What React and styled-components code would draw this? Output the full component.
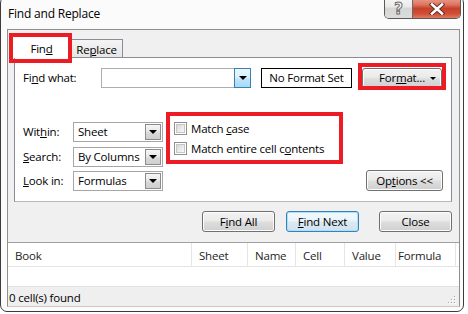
import React from 'react';
import styled, { createGlobalStyle, css } from 'styled-components';

const FONT = `"Segoe UI", "Open Sans", "Noto Sans", sans-serif`;
const RED = '#ed1c24';

const Global = createGlobalStyle`
  html, body { margin: 0; padding: 0; background: #ffffff; }
  body {
    font-family: ${FONT};
    font-size: 11.5px;
    letter-spacing: -0.2px;
    color: #000;
    width: 468px;
    height: 314px;
    overflow: hidden;
  }
  * { box-sizing: border-box; }
  u { text-decoration-thickness: 1px; text-underline-offset: 1px; }
`;

const Window = styled.div`
  width: 464px;
  height: 316px;
  margin-top: -4px;
  border: 1px solid #3c3c3c;
  border-radius: 7px;
  background: #fbfbfb;
  display: flex;
  flex-direction: column;
`;

const TitleBar = styled.div`
  height: 32px;
  display: flex;
  align-items: flex-start;
  padding-left: 7px;
  padding-right: 2px;
`;

const Title = styled.div`
  flex: 1;
  padding-top: 9px;
  font-size: 12px;
  line-height: 16px;
  color: #000;
`;

const CaptionGroup = styled.div`
  display: flex;
  height: 22px;
  border: 1px solid #5a5a5a;
  border-top: none;
  border-radius: 0 0 5px 5px;
  overflow: hidden;
`;

const CaptionButton = styled.div`
  width: ${(p) => p.$w}px;
  height: 100%;
  display: flex;
  align-items: center;
  justify-content: center;
  padding-top: 3px;
  ${(p) =>
    p.$close
      ? css`
          background: linear-gradient(#eba595 0%, #de7862 35%, #c7402a 55%, #cf4f36 80%, #e07a62 100%);
        `
      : css`
          border-right: 1px solid #6a6a6a;
          background: linear-gradient(#f8f8f8 0%, #eaeaea 45%, #d6d6d6 55%, #dcdcdc 100%);
        `}
`;

const HelpGlyph = styled.span`
  font-family: "DejaVu Sans", sans-serif;
  font-weight: bold;
  font-size: 15px;
  line-height: 15px;
  color: #ffffff;
  -webkit-text-stroke: 1px #6a6a6a;
`;

const Client = styled.div`
  flex: 1;
  margin: 0 3px 4px 6px;
  border: 1px solid #8f8f8f;
  border-bottom-color: #c8c8c8;
  background: #f0f0f0;
  display: flex;
  flex-direction: column;
`;

const TabArea = styled.div`
  margin: 0 7px 0 6px;
  display: flex;
  flex-direction: column;
`;

const TabStrip = styled.div`
  height: 27px;
  display: flex;
  align-items: flex-end;
`;

const Tab = styled.div`
  position: relative;
  display: flex;
  align-items: center;
  justify-content: center;
  border: 1px solid #898c95;
  border-bottom: none;
  ${(p) =>
    p.$active
      ? css`
          margin-left: -2px;
          width: 59px;
          height: 23px;
          margin-bottom: -1px;
          background: #ffffff;
          z-index: 2;
          padding-top: 2px;
        `
      : css`
          width: 52px;
          height: 18px;
          border-left: none;
          background: linear-gradient(#f4f4f4, #e6e6e6);
          padding-top: 1px;
        `}
`;

const Highlight = styled.div`
  position: absolute;
  border: 4px solid ${RED};
  pointer-events: none;
  z-index: 5;
  left: ${(p) => p.$l}px;
  top: ${(p) => p.$t}px;
  right: ${(p) => p.$r}px;
  bottom: ${(p) => p.$b}px;
`;

const Pane = styled.div`
  border: 1px solid #898c95;
  border-bottom-color: #b6b8be;
  background: #ffffff;
  padding: 10px 0 10px 0;
  display: flex;
  flex-direction: column;
`;

const FindRow = styled.div`
  display: flex;
  align-items: center;
  height: 20px;
  padding-left: 8px;
`;

const Label = styled.div`
  width: ${(p) => p.$w || 50}px;
  line-height: 20px;
  white-space: nowrap;
`;

const Combo = styled.div`
  width: ${(p) => p.$w}px;
  height: 20px;
  border: 1px solid ${(p) => (p.$edit ? '#abadb3' : '#a6a6a6')};
  background: #fff;
  display: flex;
  align-items: stretch;
  padding: 1px;
`;

const ComboText = styled.div`
  flex: 1;
  padding-left: 3px;
  line-height: 16px;
  white-space: nowrap;
  overflow: hidden;
`;

const ArrowBox = styled.div`
  width: 16px;
  flex: none;
  display: flex;
  align-items: center;
  justify-content: center;
  ${(p) =>
    p.$hot
      ? css`
          margin: -2px -2px -2px 0;
          width: 17px;
          border: 1px solid #3c7fb1;
          background: linear-gradient(#eaf6fd 0%, #d9f0fc 45%, #bee6fd 55%, #a7d9f5 100%);
        `
      : css`
          border: 1px solid #8c8c8c;
          background: linear-gradient(#f6f6f6 0%, #e9e9e9 45%, #d9d9d9 55%, #cfcfcf 100%);
        `}
`;

const Triangle = styled.span`
  width: 0;
  height: 0;
  border-left: 4px solid transparent;
  border-right: 4px solid transparent;
  border-top: 4px solid #000;
`;

const FormatBox = styled.div`
  margin-left: 10px;
  width: 91px;
  height: 20px;
  border: 1px solid #000;
  background: #fff;
  text-align: center;
  line-height: 18px;
  white-space: nowrap;
`;

const Button = styled.div`
  position: relative;
  width: ${(p) => p.$w || 73}px;
  height: ${(p) => p.$h || 21}px;
  margin-left: ${(p) => p.$ml || 0}px;
  border: 1px solid ${(p) => (p.$default ? '#3c7fb1' : '#707070')};
  border-radius: 3px;
  background: ${(p) =>
    p.$default
      ? 'linear-gradient(#f2f9fd 0%, #eaf4fa 45%, #dbe9f3 55%, #d0e2ef 100%)'
      : 'linear-gradient(#f2f2f2 0%, #ebebeb 45%, #dddddd 55%, #cfcfcf 100%)'};
  box-shadow: inset 0 0 0 1px ${(p) => (p.$default ? '#a9e0fb' : '#fcfcfc')};
  display: flex;
  align-items: center;
  justify-content: center;
  line-height: 16px;
  white-space: nowrap;
`;

const ButtonArrow = styled.span`
  position: absolute;
  right: 5px;
  top: 8px;
  width: 0;
  height: 0;
  border-left: 3px solid transparent;
  border-right: 3px solid transparent;
  border-top: 3px solid #000;
`;

const Lower = styled.div`
  margin-top: 24px;
  display: flex;
  align-items: flex-start;
  height: 79px;
`;

const OptionsGrid = styled.div`
  margin-top: 10px;
  padding-left: 8px;
  display: grid;
  grid-template-columns: 50px 90px;
  grid-auto-rows: 20px;
  row-gap: 4.5px;
  align-items: center;
`;

const CheckGroup = styled.div`
  margin-left: 3px;
  width: 177px;
  height: 52px;
  border: 4px solid ${RED};
  padding: 6px 0 0 4px;
  display: flex;
  flex-direction: column;
  gap: 7px;
`;

const CheckRow = styled.div`
  display: flex;
  align-items: center;
  gap: 4px;
  height: 13px;
  white-space: nowrap;
`;

const CheckBox = styled.span`
  width: 13px;
  height: 13px;
  flex: none;
  border: 1px solid #8e8f8f;
  background: #fff;
  padding: 1px;
  display: block;
  &::after {
    content: '';
    display: block;
    width: 100%;
    height: 100%;
    background: linear-gradient(135deg, #d6d6d6 0%, #ececec 60%, #f8f8f8 100%);
    border: 1px solid #c6c6c6;
    box-sizing: border-box;
  }
`;

const OptionsButtonWrap = styled.div`
  margin-left: auto;
  margin-right: 8px;
  align-self: flex-end;
`;

const ActionRow = styled.div`
  margin-top: 9px;
  padding-right: 7px;
  display: flex;
  justify-content: flex-end;
`;

const List = styled.div`
  margin-top: 10px;
  border-top: 1px solid #a0a0a0;
  background: #fff;
  display: flex;
  flex-direction: column;
`;

const HeaderRow = styled.div`
  height: 24px;
  display: flex;
  border-bottom: 1px solid #e5e5e5;
`;

const HeaderCell = styled.div`
  width: ${(p) => p.$w}px;
  flex: none;
  border-right: 1px solid #e5e5e5;
  padding-left: ${(p) => p.$pl || 7}px;
  padding-top: 2px;
  line-height: 21px;
  color: #1e1e1e;
  white-space: nowrap;
`;

const ListBody = styled.div`
  height: 19px;
`;

const StatusBar = styled.div`
  height: 20px;
  display: flex;
  align-items: center;
  justify-content: space-between;
  padding: 1px 2px 0 1px;
  background: #f0efef;
  border-top: 1px solid #e2e2e2;
`;

const Grip = () => (
  <svg width="10" height="10" viewBox="0 0 10 10" style={{ alignSelf: 'flex-end', marginBottom: 1 }}>
    {[[8, 2], [8, 5], [5, 5], [8, 8], [5, 8], [2, 8]].map(([x, y]) => (
      <g key={`${x}-${y}`}>
        <rect x={x} y={y} width="1" height="1" fill="#fff" />
        <rect x={x - 1} y={y - 1} width="1" height="1" fill="#a8a8a8" />
      </g>
    ))}
  </svg>
);

const CloseX = () => (
  <svg width="16" height="12" viewBox="0 0 16 12">
    <path d="M3 1.5 L13 10.5 M13 1.5 L3 10.5" stroke="#5a2a22" strokeWidth="4.4" strokeLinecap="square" />
    <path d="M3 1.5 L13 10.5 M13 1.5 L3 10.5" stroke="#ffffff" strokeWidth="2.6" strokeLinecap="square" />
  </svg>
);

export default function App() {
  return (
    <>
      <Global />
      <Window>
        <TitleBar>
          <Title>Find and Replace</Title>
          <CaptionGroup>
            <CaptionButton $w={28}>
              <HelpGlyph>?</HelpGlyph>
            </CaptionButton>
            <CaptionButton $w={47} $close>
              <CloseX />
            </CaptionButton>
          </CaptionGroup>
        </TitleBar>
        <Client>
          <TabArea>
            <TabStrip>
              <Tab $active>
                <span>
                  Fin<u>d</u>
                </span>
                <Highlight $l={-4} $t={-3} $r={-2} $b={-5} />
              </Tab>
              <Tab>
                <span>
                  Re<u>p</u>lace
                </span>
              </Tab>
            </TabStrip>
            <Pane>
              <FindRow>
                <Label $w={78}>
                  Fi<u>n</u>d what:
                </Label>
                <Combo $w={150} $edit>
                  <ComboText />
                  <ArrowBox $hot>
                    <Triangle />
                  </ArrowBox>
                </Combo>
                <FormatBox>No Format Set</FormatBox>
                <Button $w={80} $h={20} $ml={10}>
                  <span>
                    For<u>m</u>at...
                  </span>
                  <ButtonArrow />
                  <Highlight $l={-5} $t={-6} $r={-5} $b={-3} />
                </Button>
              </FindRow>
              <Lower>
                <OptionsGrid>
                  <Label>
                    Wit<u>h</u>in:
                  </Label>
                  <Combo $w={90}>
                    <ComboText>Sheet</ComboText>
                    <ArrowBox>
                      <Triangle />
                    </ArrowBox>
                  </Combo>
                  <Label>
                    <u>S</u>earch:
                  </Label>
                  <Combo $w={90}>
                    <ComboText>By Columns</ComboText>
                    <ArrowBox>
                      <Triangle />
                    </ArrowBox>
                  </Combo>
                  <Label>
                    <u>L</u>ook in:
                  </Label>
                  <Combo $w={90}>
                    <ComboText>Formulas</ComboText>
                    <ArrowBox>
                      <Triangle />
                    </ArrowBox>
                  </Combo>
                </OptionsGrid>
                <CheckGroup>
                  <CheckRow>
                    <CheckBox />
                    <span>
                      Match <u>c</u>ase
                    </span>
                  </CheckRow>
                  <CheckRow>
                    <CheckBox />
                    <span>
                      Match entire cell c<u>o</u>ntents
                    </span>
                  </CheckRow>
                </CheckGroup>
                <OptionsButtonWrap>
                  <Button $w={77}>
                    <span>
                      Op<u>t</u>ions &lt;&lt;
                    </span>
                  </Button>
                </OptionsButtonWrap>
              </Lower>
            </Pane>
          </TabArea>
          <ActionRow>
            <Button>
              <span>
                F<u>i</u>nd All
              </span>
            </Button>
            <Button $default $ml={11}>
              <span>
                <u>F</u>ind Next
              </span>
            </Button>
            <Button $ml={20}>Close</Button>
          </ActionRow>
          <List>
            <HeaderRow>
              <HeaderCell $w={184}>Book</HeaderCell>
              <HeaderCell $w={56}>Sheet</HeaderCell>
              <HeaderCell $w={48}>Name</HeaderCell>
              <HeaderCell $w={49}>Cell</HeaderCell>
              <HeaderCell $w={51}>Value</HeaderCell>
              <HeaderCell $w={60} $pl={2}>Formula</HeaderCell>
            </HeaderRow>
            <ListBody />
          </List>
          <StatusBar>
            <span>0 cell(s) found</span>
            <Grip />
          </StatusBar>
        </Client>
      </Window>
    </>
  );
}
